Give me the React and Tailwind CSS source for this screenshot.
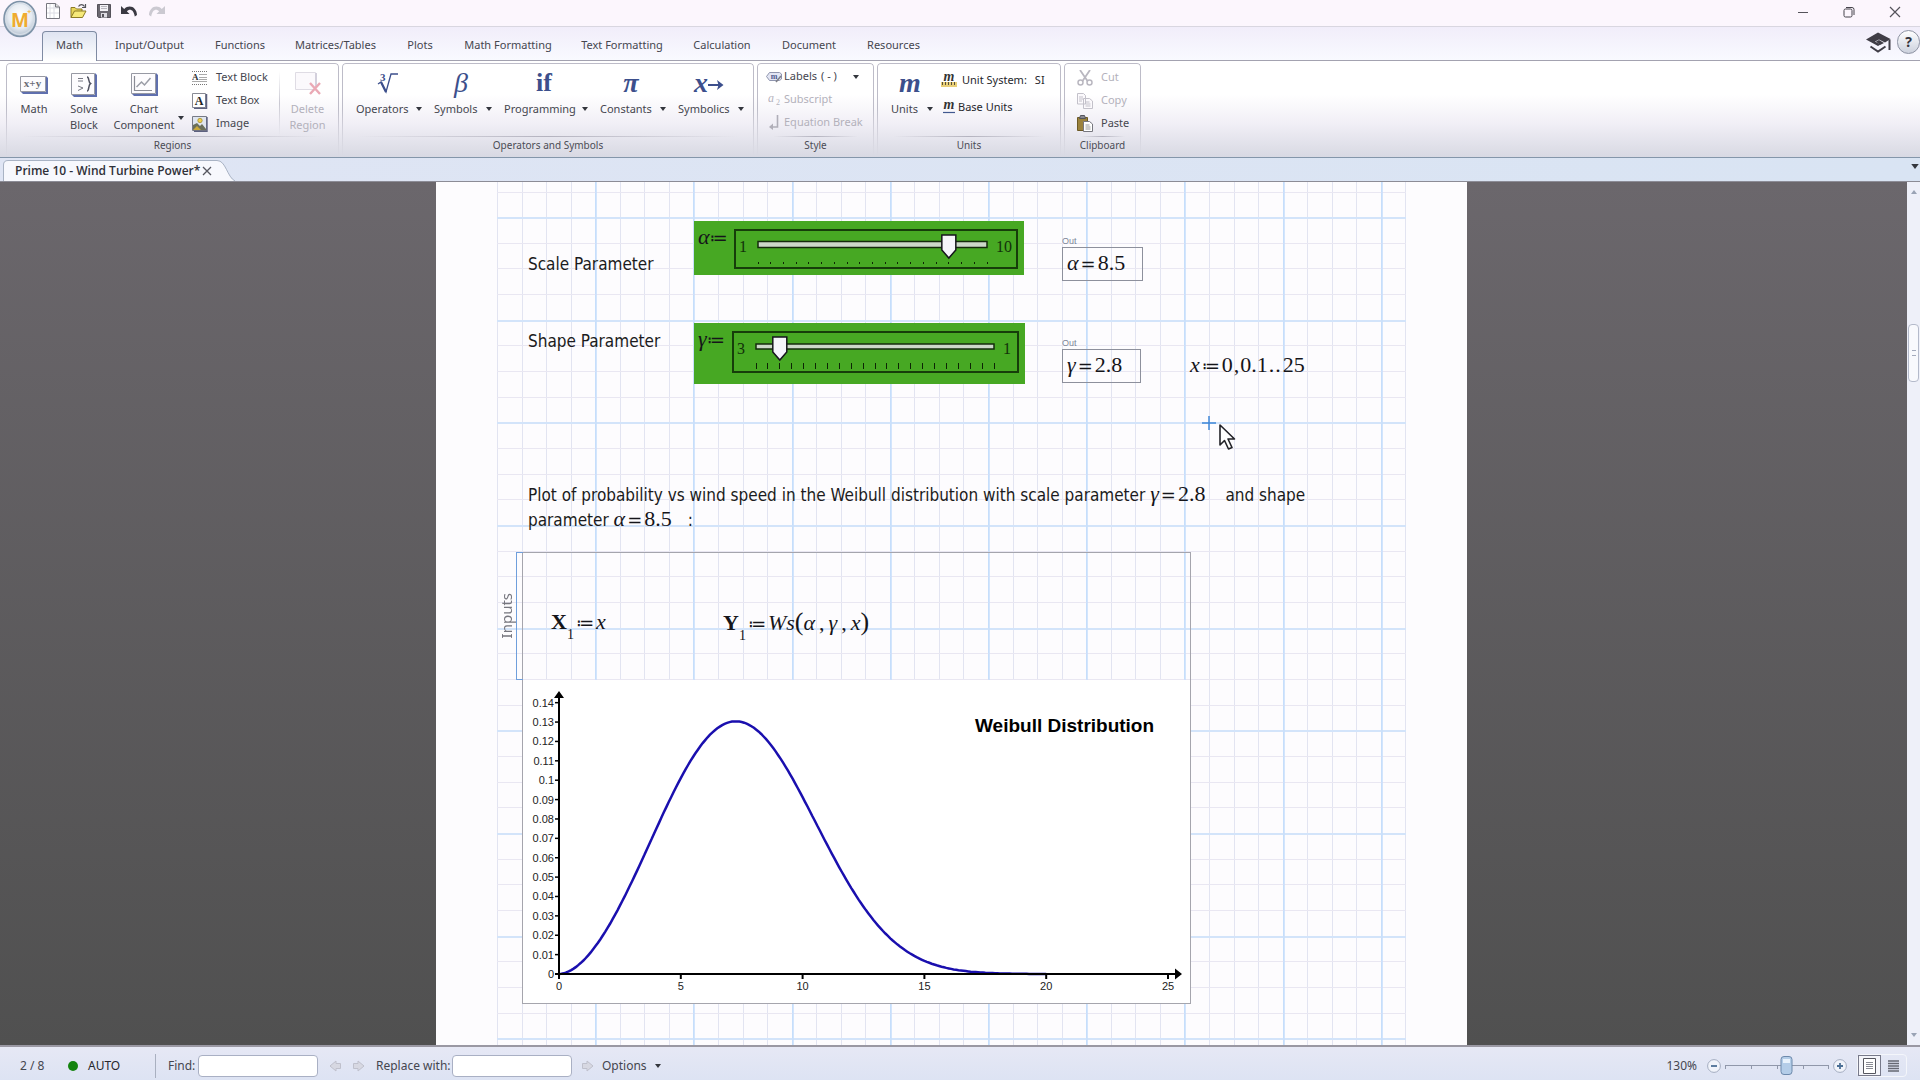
import React, { useState } from "react";
import clsx from "clsx";

const TABS = [
  { label: "Math", width: "w-[55px]" },
  { label: "Input/Output", width: "w-[95px]" },
  { label: "Functions", width: "w-[76px]" },
  { label: "Matrices/Tables", width: "w-[105px]" },
  { label: "Plots", width: "w-[54px]" },
  { label: "Math Formatting", width: "w-[112px]" },
  { label: "Text Formatting", width: "w-[106px]" },
  { label: "Calculation", width: "w-[84px]" },
  { label: "Document", width: "w-[80px]" },
  { label: "Resources", width: "w-[79px]" },
];

// ---------------- SMALL ICONS ----------------
const Caret = ({ className }) => (
  <svg viewBox="0 0 6 4" className={clsx("h-1 w-1.5 shrink-0", className)} aria-hidden="true">
    <path d="M0 0h6L3 4z" fill="#33363d" />
  </svg>
);

const Logo = () => (
  <svg viewBox="0 0 34 38" className="h-[38px] w-[34px]" aria-hidden="true">
    <defs>
      <radialGradient id="orb" cx="50%" cy="40%" r="60%">
        <stop offset="0" stopColor="#ffffff" />
        <stop offset="0.6" stopColor="#e6ebf2" />
        <stop offset="1" stopColor="#aebccb" />
      </radialGradient>
    </defs>
    <ellipse cx="17" cy="19" rx="16" ry="17.5" fill="url(#orb)" stroke="#7e93a8" strokeWidth="1.6" />
    <ellipse cx="17" cy="19" rx="14" ry="15.5" fill="none" stroke="#d5dde6" strokeWidth="1.2" />
    <text x="17" y="27" textAnchor="middle" fontFamily="Open Sans, sans-serif" fontWeight="bold" fontSize="19" fill="#efab2f">M</text>
    <path d="M26 9.500l.7 1.600 1.600.5-1.600.6-.7 1.600-.6-1.600-1.600-.6 1.600-.5z" fill="#f3bf57" />
  </svg>
);

const NewIcon = () => (
  <svg viewBox="0 0 14 16" className="h-4 w-3.5" aria-hidden="true">
    <path d="M.5.500h9l4 3.500v11.500H.5z" fill="#fff" stroke="#77777f" />
    <path d="M4 1v14M8 1v14M1 5h12M1 10h12" stroke="#dcdce4" />
    <path d="M9.500.500V4h4" fill="#ddd" stroke="#77777f" />
  </svg>
);

const OpenIcon = () => (
  <svg viewBox="0 0 17 16" className="h-4 w-[17px]" aria-hidden="true">
    <path d="M1 14.500V4.500h4l1.500 1.500H12v2" fill="#e8d65a" stroke="#8b7a24" />
    <path d="M1 14.500L4.500 8H16l-3.500 6.500z" fill="#f6e979" stroke="#8b7a24" />
    <path d="M8.500 3.500C10 1 13 1 14.500 3.500M15.500 1v3.500H12" fill="none" stroke="#55555c" strokeWidth="1.2" />
  </svg>
);

const SaveIcon = () => (
  <svg viewBox="0 0 14 14" className="h-3.5 w-3.5" aria-hidden="true">
    <path d="M.5.500h13v13h-12l-1-1z" fill="#6b6870" stroke="#55525a" />
    <path d="M3 1h8v6H3z" fill="#f4f2f6" />
    <path d="M4 2.500h6M4 4.500h6" stroke="#b9b6bf" />
    <path d="M4 9h6v4.500H4z" fill="#dedce2" />
    <path d="M5 10h2v3H5z" fill="#55525a" />
  </svg>
);

const UndoIcon = ({ color }) => (
  <svg viewBox="0 0 17 14" className="h-3.5 w-[17px]" aria-hidden="true">
    <path d="M0 2v8h8.500L5.800 7.300C8.500 4.500 12.500 5 13.800 12.500L16 11C16 3.500 8.500-.5 3.200 4.900z" fill={color} />
  </svg>
);

const CardIcon = ({ children, width, height }) => (
  <svg viewBox={`0 0 ${width} ${height}`} width={width} height={height} aria-hidden="true">
    <path d={`M${width - 3} 1l2 2v${height - 3}H4l-2-2h${width - 5}z`} fill="#5f6fae" />
    <path d={`M1.500 1.500h${width - 5}v${height - 4}h${5 - width}z`} fill="#fdfcfe" stroke="#9799a3" />
    {children}
  </svg>
);

const MathIcon = () => (
  <CardIcon width={30} height={19}>
    <text x="13.500" y="12" textAnchor="middle" fontFamily="Liberation Serif, serif" fontWeight="bold" fontSize="11" fill="#6b6c76">x+y</text>
  </CardIcon>
);

const SolveIcon = () => (
  <CardIcon width={28} height={25}>
    <path d="M8 6.500h5M8 9h5M8 14l5 2-5 2.500" fill="none" stroke="#777983" />
    <path d="M17 5c2.500 0 1 5 3.500 6.500C18 13 19.500 19 17 19" fill="none" stroke="#4f5160" strokeWidth="1.5" />
  </CardIcon>
);

const ChartIcon = () => (
  <CardIcon width={29} height={24}>
    <path d="M4.500 4v14.500H22" fill="none" stroke="#8a8c95" strokeWidth="1.2" />
    <path d="M6.500 15l5-5 3 3 6-7" fill="none" stroke="#9a9ca6" strokeWidth="1.5" />
  </CardIcon>
);

const DeleteIcon = () => (
  <svg viewBox="0 0 28 26" className="h-[26px] w-7" aria-hidden="true">
    <path d="M1.500 1.500h20v17h-20z" fill="#fbf9fc" stroke="#dfdce4" />
    <path d="M22 2v14" stroke="#d3d0dc" strokeWidth="2" />
    <path d="M16 12l10 11M26 12L16 23" stroke="#eaa9b5" strokeWidth="2.400" />
  </svg>
);

const TextBlockIcon = () => (
  <svg viewBox="0 0 16 14" className="h-3.5 w-4" aria-hidden="true">
    <path d="M0 .500h16M0 13.500h16" stroke="#777" strokeDasharray="1 1" />
    <text x="0" y="9" fontFamily="Liberation Serif, serif" fontWeight="bold" fontSize="9" fill="#333">A</text>
    <path d="M7 3.500h8M7 6.500h8M0 10.500h15M7 8.500h8" stroke="#aaa" />
  </svg>
);

const TextBoxIcon = () => (
  <svg viewBox="0 0 16 16" className="h-4 w-4" aria-hidden="true">
    <path d="M.5.500h13v14H.5z" fill="#fff" stroke="#888a94" />
    <path d="M14.500 1v14.500H2" fill="none" stroke="#5d6180" strokeWidth="1.5" />
    <text x="7" y="12" textAnchor="middle" fontFamily="Liberation Serif, serif" fontWeight="bold" fontSize="12" fill="#222">A</text>
  </svg>
);

const ImageIcon = () => (
  <svg viewBox="0 0 16 16" className="h-4 w-4" aria-hidden="true">
    <path d="M.5.500h14v14H.5z" fill="#dfe5ee" stroke="#777a86" />
    <circle cx="8" cy="4.500" r="2.200" fill="#f0d04a" stroke="#9a8530" strokeWidth=".7" />
    <path d="M1 14V9l4-2 3 3 2-2 4 5v1z" fill="#6b6f5a" />
    <path d="M1 14l4-4 4 4z" fill="#c9a83a" />
    <path d="M15 1v14.500H2" fill="none" stroke="#5d6180" strokeWidth="1.4" />
  </svg>
);

const LabelsIcon = () => (
  <svg viewBox="0 0 16 12" className="h-3 w-4" aria-hidden="true">
    <path d="M3.500 1.500h10l2 1.500v5l-2 1.500h-10l-3-4z" fill="#e3e6f4" stroke="#8f95ae" />
    <text x="8" y="8" textAnchor="middle" fontFamily="Liberation Serif, serif" fontWeight="bold" fontSize="8" fill="#4c5a8c">m</text>
    <path d="M10 11l5-6" stroke="#7f8088" strokeWidth="1.6" />
  </svg>
);

const SubscriptIcon = () => (
  <svg viewBox="0 0 14 13" className="h-[13px] w-3.5" aria-hidden="true">
    <text x="0" y="9" fontFamily="Liberation Serif, serif" fontStyle="italic" fontSize="12" fill="#b5b3bd">a</text>
    <text x="8" y="12" fontFamily="Liberation Serif, serif" fontSize="8" fill="#b5b3bd">2</text>
  </svg>
);

const BreakIcon = () => (
  <svg viewBox="0 0 14 15" className="h-[15px] w-3.5" aria-hidden="true">
    <path d="M9.500 0v12H3" fill="none" stroke="#b0aeb8" strokeWidth="1.600" />
    <path d="M5 8.500L1 12l4 3z" fill="#b0aeb8" />
  </svg>
);

const UnitSystemIcon = () => (
  <svg viewBox="0 0 16 16" className="h-4 w-4 overflow-visible" aria-hidden="true">
    <text x="8" y="8" textAnchor="middle" fontFamily="Liberation Serif, serif" fontStyle="italic" fontWeight="bold" fontSize="14" fill="#333">m</text>
    <path d="M0 9h16v5H0z" fill="#e9cf77" />
    <path d="M1.500 9v3M4.500 9v3M7.500 9v3M10.500 9v3M13.500 9v3" stroke="#57503a" />
  </svg>
);

const BaseUnitsIcon = () => (
  <svg viewBox="0 0 12 13" className="h-[13px] w-3 overflow-visible" aria-hidden="true">
    <text x="6" y="8" textAnchor="middle" fontFamily="Liberation Serif, serif" fontStyle="italic" fontWeight="bold" fontSize="14" fill="#333">m</text>
    <path d="M0 11.500h12" stroke="#41588f" strokeWidth="1.2" />
  </svg>
);

const CutIcon = () => (
  <svg viewBox="0 0 16 16" className="h-4 w-4" fill="none" stroke="#b9b7c0" aria-hidden="true">
    <path d="M3 0l7.500 11M13 0L5.500 11" strokeWidth="1.8" />
    <circle cx="3.500" cy="12.500" r="2.500" strokeWidth="1.500" />
    <circle cx="12.500" cy="12.500" r="2.500" strokeWidth="1.500" />
  </svg>
);

const CopyIcon = () => (
  <svg viewBox="0 0 16 16" className="h-4 w-4" fill="#fbf9fc" stroke="#c3c1ca" aria-hidden="true">
    <path d="M.5.500h6l2 2V11H.5zM6.500 5.500h6l3 2.500v7.500h-9z" />
    <path d="M2 4h4M2 6h4M2 8h3M8.500 9h4M8.500 11h5M8.500 13h5" />
  </svg>
);

const PasteIcon = () => (
  <svg viewBox="0 0 16 17" className="h-[17px] w-4" aria-hidden="true">
    <path d="M.5 2.500h10v13H.5z" fill="#9b823c" stroke="#6d5a26" />
    <path d="M3.500.500h4l1 3h-6z" fill="#8b8b93" stroke="#55555c" />
    <path d="M6.500 6.500h6l3 2.500v7.500h-9z" fill="#fff" stroke="#77777f" />
    <path d="M8.500 10h4M8.500 12h5M8.500 14h5" stroke="#999" />
  </svg>
);

const RootIcon = () => (
  <svg viewBox="0 0 21 22" className="h-[22px] w-[21px]" aria-hidden="true">
    <path d="M1 12l3-2 5 10 5-18h7" fill="none" stroke="#3c4f8c" strokeWidth="1.300" />
    <path d="M4 10l5 10" stroke="#3c4f8c" strokeWidth="2.200" />
    <text x="3" y="9" fontFamily="Liberation Serif, serif" fontSize="11" fontWeight="bold" fill="#3c4f8c">3</text>
  </svg>
);

const SchoolIcon = () => (
  <svg viewBox="0 0 25 21" className="h-[21px] w-[25px]" aria-hidden="true">
    <path d="M0 7.500L12 .500l12.500 6.500L19 10.500 13 7.500 9 9.500l5.500 3-2.500 1.500z" fill="#3f3d46" />
    <path d="M10 9.500l3-1.500 5 3-4 2z" fill="#3f3d46" />
    <path d="M23.500 7.500V18" stroke="#3f3d46" strokeWidth="2" />
    <path d="M4.500 14.500l7.500 5 7.500-5" fill="none" stroke="#3f3d46" strokeWidth="2" />
  </svg>
);

const FindArrow = ({ flip }) => (
  <svg viewBox="0 0 12 12" className={clsx("h-3 w-3", flip && "-scale-x-100")} aria-hidden="true">
    <path d="M.5 3.500H5V1l6 5-6 5V8.500H.5z" fill="#d7d8e2" stroke="#bfc0cc" />
  </svg>
);

// ---------------- RIBBON PIECES ----------------
const Group = ({ title, width, children }) => (
  <section aria-label={title} className={clsx("relative flex h-[92px] shrink-0 flex-col", width)}>
    <span className="pointer-events-none absolute inset-0 rounded-t border border-b-0 border-[#bdbcc8] [mask-image:linear-gradient(black_50%,transparent)]" />
    <div className="flex h-[73px]">{children}</div>
    <div className="mx-4 h-px bg-linear-to-r from-transparent via-[#b4b3bf] to-transparent" />
    <h2 className="text-center text-[10px] leading-[17px] text-[#4b4c55]">{title}</h2>
  </section>
);

const BigButton = ({ icon, label, width, disabled }) => (
  <button
    type="button"
    disabled={disabled}
    className={clsx("flex flex-col items-center pt-2", width, disabled && "text-[#b3b1bb]")}
  >
    <span className="flex h-[26px] items-center">{icon}</span>
    <span className="mt-1 whitespace-pre text-center leading-4">{label}</span>
  </button>
);

const MenuButton = ({ glyph, label, width }) => (
  <button type="button" className={clsx("flex flex-col items-start pt-1.5", width)}>
    <span className="flex h-7 w-full items-center justify-center pr-1 font-['Liberation_Serif',serif] text-[28px] leading-7 text-[#3c4f8c]">
      {glyph}
    </span>
    <span className="mt-1 flex w-full items-center justify-between leading-4">
      {label}
      <Caret />
    </span>
  </button>
);

const SmallButton = ({ icon, label, disabled, children }) => (
  <button
    type="button"
    disabled={disabled}
    className={clsx("flex h-[23px] items-center whitespace-nowrap", disabled && "text-[#b3b1bb]")}
  >
    {icon}
    {label}
    {children}
  </button>
);

const Ribbon = () => (
  <div className="flex h-[97px] shrink-0 gap-[3px] border-b border-[#8496aa] bg-linear-to-b from-white from-35% via-[#f1eff6] via-65% to-[#d8d9e3] pt-0.5 pl-1.5">
    <Group title="Regions" width="w-[333px]">
      <BigButton icon={<MathIcon />} label="Math" width="w-14" />
      <BigButton icon={<SolveIcon />} label={"Solve\nBlock"} width="w-11" />
      <div className="flex w-[78px] items-end">
        <BigButton icon={<ChartIcon />} label={"Chart\nComponent"} width="h-full grow pl-1" />
        <Caret className="mb-4" />
      </div>
      <div className="flex flex-col pt-[3px] pl-2">
        <SmallButton icon={<span className="w-6"><TextBlockIcon /></span>} label="Text Block" />
        <SmallButton icon={<span className="w-6"><TextBoxIcon /></span>} label="Text Box" />
        <SmallButton icon={<span className="w-6"><ImageIcon /></span>} label="Image" />
      </div>
      <div className="mt-2 ml-auto w-px bg-linear-to-b from-transparent via-[#c9c8d2] to-transparent" />
      <BigButton icon={<DeleteIcon />} label={"Delete\nRegion"} width="mr-1 w-[55px]" disabled />
    </Group>

    <Group title="Operators and Symbols" width="w-[412px]">
      <div className="flex gap-3 pl-[14px]">
        <MenuButton glyph={<RootIcon />} label="Operators" width="w-[66px]" />
        <MenuButton glyph={<i>β</i>} label="Symbols" width="w-[58px]" />
        <MenuButton glyph={<span className="text-[26px] font-bold">if</span>} label="Programming" width="w-[84px]" />
        <MenuButton glyph={<i className="font-bold">π</i>} label="Constants" width="w-[66px]" />
        <MenuButton
          glyph={
            <>
              <i className="font-bold">x</i>
              <svg viewBox="0 0 16 12" className="mt-1 h-3 w-4" aria-hidden="true">
                <path d="M0 6h11" stroke="#3c4f8c" strokeWidth="2" />
                <path d="M9 1l6.500 5L9 11l1.500-5z" fill="#3c4f8c" />
              </svg>
            </>
          }
          label="Symbolics"
          width="w-[66px]"
        />
      </div>
    </Group>

    <Group title="Style" width="w-[117px]">
      <div className="flex flex-col pt-[2px] pl-[9px]">
        <SmallButton icon={<span className="w-[18px]"><LabelsIcon /></span>} label="Labels">
          <span className="ml-1">( - )</span>
          <Caret className="ml-4" />
        </SmallButton>
        <SmallButton icon={<span className="w-[18px] pl-0.5"><SubscriptIcon /></span>} label="Subscript" disabled />
        <SmallButton icon={<span className="w-[18px] pl-0.5"><BreakIcon /></span>} label="Equation Break" disabled />
      </div>
    </Group>

    <Group title="Units" width="w-[184px]">
      <div className="flex pl-[14px]">
        <MenuButton glyph={<i className="font-bold">m</i>} label="Units" width="w-[42px]" />
      </div>
      <div className="flex flex-col gap-1 pt-1.5 pl-2 text-[#26272c]">
        <SmallButton icon={<span className="w-[21px]"><UnitSystemIcon /></span>} label="Unit System:">
          <span className="ml-2">SI</span>
        </SmallButton>
        <SmallButton icon={<span className="w-[17px] pl-0.5"><BaseUnitsIcon /></span>} label="Base Units" />
      </div>
    </Group>

    <Group title="Clipboard" width="w-[77px]">
      <div className="flex flex-col pt-[3px] pl-[13px]">
        <SmallButton icon={<span className="w-6"><CutIcon /></span>} label="Cut" disabled />
        <SmallButton icon={<span className="w-6"><CopyIcon /></span>} label="Copy" disabled />
        <SmallButton icon={<span className="w-6"><PasteIcon /></span>} label="Paste" />
      </div>
    </Group>
  </div>
);

// ---------------- TITLE BAR + TABS ----------------
const TitleBar = () => (
  <header className="relative shrink-0">
    <div className="flex h-[27px] items-center border-b border-[#d9d6e0] bg-[#fcf6fd] pl-[46px]">
      <div className="flex items-center gap-2.5 pb-1">
        <button type="button" aria-label="New"><NewIcon /></button>
        <button type="button" aria-label="Open"><OpenIcon /></button>
        <button type="button" aria-label="Save"><SaveIcon /></button>
        <button type="button" aria-label="Undo"><UndoIcon color="#3a3942" /></button>
        <button type="button" aria-label="Redo" className="-scale-x-100"><UndoIcon color="#cbc9d1" /></button>
      </div>
      <div className="ml-auto flex pr-0.5 pb-0.5">
        <button type="button" aria-label="Minimize" className="flex w-[46px] justify-center">
          <svg viewBox="0 0 12 12" className="h-3 w-3"><path d="M1 6.500h10" stroke="#55535b" /></svg>
        </button>
        <button type="button" aria-label="Restore" className="flex w-[46px] justify-center">
          <svg viewBox="0 0 12 12" className="h-3 w-3" fill="none" stroke="#45434b">
            <rect x="1" y="3" width="8" height="8" rx="1.500" />
            <path d="M3 1.500h6A2 2 0 0111 3.500V9" />
          </svg>
        </button>
        <button type="button" aria-label="Close" className="flex w-[46px] justify-center">
          <svg viewBox="0 0 12 12" className="h-3 w-3"><path d="M1 1l10 10M11 1L1 11" stroke="#55535b" strokeWidth="1.200" /></svg>
        </button>
      </div>
    </div>
    <nav className="flex h-[34px] items-end border-b border-[#a3a2b0] bg-linear-to-b from-[#f1edfa] to-[#f9faff] pl-[42px]">
      <div className="-mb-px flex gap-[5px]">
        {TABS.map((tab, i) => (
          <button
            key={tab.label}
            type="button"
            className={clsx(
              "h-[30px] rounded-t border border-b-0 pb-0.5 text-center whitespace-nowrap",
              tab.width,
              i === 0 ? "border-[#7f8ba3] bg-linear-to-b from-[#dfe4f1] to-white" : "border-transparent"
            )}
          >
            {tab.label}
          </button>
        ))}
      </div>
      <div className="mb-1.5 ml-auto flex items-center gap-1.5">
        <button type="button" aria-label="Learning"><SchoolIcon /></button>
        <button
          type="button"
          aria-label="Help"
          className="h-6 w-[23px] rounded-full border border-[#8d93a3] bg-linear-to-b from-white to-[#ccd1dd] text-[14px] leading-[22px] font-bold text-[#34343c]"
        >
          ?
        </button>
      </div>
    </nav>
    <button type="button" aria-label="Application menu" className="absolute top-0 left-[3px]"><Logo /></button>
  </header>
);

const DocumentTabs = () => (
  <div className="flex h-6 shrink-0 items-end border-b border-[#8c8c96] bg-linear-to-r from-[#dfe5f4] to-[#d9e4f3]">
    <div className="relative ml-[3px] flex h-[21px] w-[232px] items-center">
      <svg viewBox="0 0 232 21" className="absolute inset-0 h-full w-full" preserveAspectRatio="none" aria-hidden="true">
        <path d="M.5 21V5Q.5.500 5 .500H214C223 .500 224 17 232 21" fill="#f7f8fd" stroke="#a9b3c4" />
      </svg>
      <span className="relative pl-3 font-['Open_Sans',sans-serif] text-[12px] font-semibold text-[#2f3038]">
        Prime 10 - Wind Turbine Power*
      </span>
      <button type="button" aria-label="Close document" className="relative ml-0.5">
        <svg viewBox="0 0 10 10" className="h-2.5 w-2.5"><path d="M1 1l8 8M9 1L1 9" stroke="#55565f" strokeWidth="1.300" /></svg>
      </button>
    </div>
    <button type="button" aria-label="Open documents" className="mb-3 ml-auto pr-px"><Caret className="h-[5px] w-2" /></button>
  </div>
);

// ---------------- WORKSHEET ----------------
const STEP_X = 24.55;
const STEP_Y = 25.66;

const GraphPaper = () => {
  const columns = Array.from({ length: 38 }, (_, i) => i);
  const rows = Array.from({ length: 34 }, (_, i) => i);
  return (
    <svg width="909" height="863" className="absolute top-0 left-[61px]" shapeRendering="crispEdges" aria-hidden="true">
      {columns.map((i) => (
        <rect key={`c${i}`} x={Math.round(i * STEP_X)} y="0" width="1" height="863" fill={i % 4 === 0 && i ? "#bfdbfa" : "#e2e4f1"} />
      ))}
      {rows.map((i) => (
        <rect
          key={`r${i}`}
          x="0"
          y={Math.round(9.500 + i * STEP_Y)}
          width="909"
          height={i % 4 === 1 ? 2 : 1}
          fill={i % 4 === 1 ? "#d3e4fa" : "#e9e7f2"}
        />
      ))}
      {columns.filter((i) => i && i % 4 === 0).map((i) => (
        <rect key={`m${i}`} x={Math.round(i * STEP_X)} y="0" width="2" height="863" fill="#c8dffb" fillOpacity="0.8" />
      ))}
    </svg>
  );
};

const Op = ({ children }) => (
  <span className="mx-0.5 font-['DejaVu_Sans',sans-serif] text-[18px] leading-none">{children}</span>
);

const Comma = () => <span className="mx-px">,</span>;

const ArgComma = () => <span className="mx-1">,</span>;

const mathFont = "font-['Liberation_Serif',serif] text-[22px] leading-6 whitespace-nowrap text-[#15151a]";

const Result = ({ name, value }) => (
  <span className={mathFont}>
    <i>{name}</i>
    <Op>=</Op>
    {value}
  </span>
);

const SliderControl = ({ name, left, right, min, max, step, initial, reversed, ticks, size }) => {
  const [value, setValue] = useState(initial);
  const share = reversed ? (max - value) / (max - min) : (value - min) / (max - min);
  const { track, tall, tick } = size;
  const thumbX = 9 + share * track;
  return (
    <div className={clsx("flex bg-[#47a823] pl-1", size.box)}>
      <label htmlFor={`slider-${name}`} className={clsx("pt-1", mathFont)}>
        <i>{name}</i>
        <span className="font-['DejaVu_Sans',sans-serif] text-[18px] leading-none">≔</span>
      </label>
      <div className={clsx("mt-2 ml-auto flex border-2 border-[#163d0a] pl-[3px] font-['Liberation_Serif',serif] text-[16px] leading-8 text-[#12300a]", size.frame)}>
        <span className="w-2.5">{left}</span>
        <div className="relative">
          <svg width={track + 18} height={tall} aria-hidden="true">
            <rect x="9" y={tick ? 11 : 10.500} width={track} height={tick ? 5 : 6} fill="#ccd8c8" stroke="#142b0c" strokeWidth="1.500" />
            {Array.from({ length: ticks }, (_, i) => (
              <rect key={i} x={Math.round(8.500 + (i * track) / (ticks - 1))} y={tick ? 30 : 31} width="1" height={tick ? 6 : 2} fill="#0d2405" />
            ))}
            <path d={`M${thumbX - 7} 4h14v15l-7 8-7-8z`} fill="#f6f5fb" stroke="#15151c" strokeWidth="1.500" />
          </svg>
          <input
            id={`slider-${name}`}
            type="range"
            min={min}
            max={max}
            step={step}
            value={value}
            dir={reversed ? "rtl" : "ltr"}
            onChange={(e) => setValue(Number(e.target.value))}
            className="absolute inset-x-0 top-0 h-7 cursor-pointer opacity-0"
          />
        </div>
        <span>{right}</span>
      </div>
    </div>
  );
};

const OutBox = ({ width, children }) => (
  <div>
    <div className="font-['Liberation_Sans',sans-serif] text-[9px] leading-3 text-[#7c8698]">Out</div>
    <div className={clsx("h-[34px] border border-[#8d909c] pt-[3px] pl-1", width)}>{children}</div>
  </div>
);

// Weibull density with scale 8.5 and shape 2.8
const weibull = (x, scale, shape) =>
  (shape / scale) * (x / scale) ** (shape - 1) * Math.exp(-((x / scale) ** shape));

const WeibullChart = () => {
  const px = (x) => 36 + x * 24.36;
  const py = (y) => 294 - y * 1938;
  const points = Array.from({ length: 201 }, (_, i) => {
    const x = i / 10;
    return `${px(x).toFixed(1)},${py(weibull(x, 8.5, 2.8)).toFixed(1)}`;
  }).join(" ");
  return (
    <svg width="667" height="323" className="block bg-white" fontFamily="Liberation Sans, Arial, sans-serif" role="img" aria-label="Weibull Distribution">
      <polyline points={points} fill="none" stroke="#1a0fae" strokeWidth="2.500" />
      <path d="M36 16v282M32 294h620" stroke="#000" strokeWidth="2" />
      <path d="M36 11l5 7H31zM659 294l-7-5.500v11z" fill="#000" />
      {Array.from({ length: 15 }, (_, i) => (
        <g key={i}>
          <path d={`M32 ${py(i / 100)}h4`} stroke="#000" strokeWidth="1.500" />
          <text x="31" y={py(i / 100) + 4} textAnchor="end" fontSize="11" fill="#222">{i / 100}</text>
        </g>
      ))}
      {[0, 5, 10, 15, 20, 25].map((x) => (
        <g key={x}>
          <path d={`M${px(x)} 294v5`} stroke="#000" strokeWidth="2" />
          <text x={px(x)} y="310" textAnchor="middle" fontSize="11" fill="#222">{x}</text>
        </g>
      ))}
      <text x="452" y="52" fontSize="19" fontWeight="bold" fill="#000">Weibull Distribution</text>
    </svg>
  );
};

const bodyText = "font-['DejaVu_Sans_Condensed','DejaVu_Sans',sans-serif] text-[17px] leading-6 text-[#1b1b20]";

const Worksheet = () => (
  <article className="relative h-[1400px] w-[1031px] shrink-0 bg-[#fdfcfe]">
    <GraphPaper />

    <p className={clsx("absolute top-[70px] left-[92px]", bodyText)}>Scale Parameter</p>
    <p className={clsx("absolute top-[147px] left-[92px]", bodyText)}>Shape Parameter</p>

    <div className="absolute top-[39px] left-[258px]">
      <SliderControl
        name="α" left="1" right="10" min={1} max={10} step={0.5} initial={8.5} ticks={19}
        size={{ track: 229, tall: 36, tick: false, box: "h-[54px] w-[330px] pr-1.5", frame: "h-10 w-[284px]" }}
      />
    </div>
    <div className="absolute top-[141px] left-[258px]">
      <SliderControl
        name="γ" left="3" right="1" min={1} max={3} step={0.1} initial={2.8} reversed ticks={21}
        size={{ track: 238, tall: 38, tick: true, box: "h-[61px] w-[331px] pr-1.5", frame: "h-[42px] w-[287px]" }}
      />
    </div>

    <div className="absolute top-[53px] left-[626px]">
      <OutBox width="w-[81px]"><Result name="α" value="8.5" /></OutBox>
    </div>
    <div className="absolute top-[155px] left-[626px]">
      <OutBox width="w-[79px]"><Result name="γ" value="2.8" /></OutBox>
    </div>
    <div className={clsx("absolute top-[171px] left-[754px]", mathFont)}>
      <i>x</i>
      <Op>≔</Op>0<Comma />0.1<span className="mx-px">.</span>.<span className="ml-0.5">25</span>
    </div>

    {/* ---------------- CURSOR ---------------- */}
    <svg width="16" height="16" className="absolute top-[233px] left-[765px]" aria-hidden="true">
      <path d="M8 1v14M1 8h14" stroke="#3f86d8" strokeWidth="1.500" />
    </svg>
    <svg width="18" height="28" className="absolute top-[241px] left-[782px]" aria-hidden="true">
      <path d="M2 2v20l4.500-4.500L10.500 26l3.500-1.500-4-8.500h6.500z" fill="#fff" stroke="#222228" strokeWidth="1.600" strokeLinejoin="round" />
    </svg>

    <p className={clsx("absolute top-[300px] left-[92px] whitespace-nowrap", bodyText)}>
      Plot of probability vs wind speed in the Weibull distribution with scale parameter{" "}
      <Result name="γ" value="2.8" />
      <span className="pl-5">and shape</span>
      <br />
      parameter <Result name="α" value="8.5" />
      <span className="pl-4">:</span>
    </p>

    {/* ---------------- CHART COMPONENT ---------------- */}
    <section className="absolute top-[370px] left-[86px] w-[669px] border border-[#a5a5ad]">
      <div className="absolute -top-px -left-[7px] h-[128px] w-[7px] border border-r-0 border-[#6f9fdc]" />
      <div className="absolute top-10 -left-[27px] rotate-180 font-['Noto_Sans',sans-serif] text-[15px] leading-5 text-[#77777f] [writing-mode:vertical-rl]">
        Inputs
      </div>
      <div className={clsx("flex h-[127px] items-start pt-[57px] pl-7", mathFont)}>
        <div className="w-[172px]">
          <b className="font-bold">X</b>
          <span className="inline-block translate-y-2.5 text-[14px] leading-none">1</span>
          <Op>≔</Op>
          <i>x</i>
        </div>
        <div>
          <b className="font-bold">Y</b>
          <span className="inline-block translate-y-2.5 text-[14px] leading-none">1</span>
          <Op>≔</Op>
          <i>Ws</i>
          <span className="text-[26px]">(</span>
          <i>α</i><ArgComma /><i>γ</i><ArgComma /><i>x</i>
          <span className="text-[26px]">)</span>
        </div>
      </div>
      <WeibullChart />
    </section>
  </article>
);

// ---------------- STATUS BAR ----------------
const ZoomButton = ({ label, path }) => (
  <button type="button" aria-label={label}>
    <svg viewBox="0 0 14 14" className="h-3.5 w-3.5">
      <circle cx="7" cy="7" r="6.400" fill="#f0f3fa" stroke="#a4adc0" />
      <path d={path} stroke="#4c7096" strokeWidth="1.800" />
    </svg>
  </button>
);

const StatusBar = () => {
  const [find, setFind] = useState("");
  const [replace, setReplace] = useState("");
  const box = "h-[22px] w-[120px] rounded-sm border border-[#a9b0c4] bg-white px-1";
  return (
    <footer className="flex h-[35px] shrink-0 items-center border-t-2 border-[#9a98a3] bg-linear-to-b from-[#e6e8f5] to-[#dde3f3] pt-1 text-[12px]">
      <span className="w-12 pl-5">2 / 8</span>
      <span className="ml-5 h-2.5 w-2.5 rounded-full bg-[#14840f]" />
      <span className="ml-2.5 w-[67px] text-[#26272c]">AUTO</span>
      <span className="h-6 w-px bg-[#a9b0c0]" />
      <label htmlFor="find" className="ml-3 w-[30px] whitespace-nowrap">Find:</label>
      <input id="find" value={find} onChange={(e) => setFind(e.target.value)} className={box} />
      <div className="flex w-[58px] items-center justify-center gap-3">
        <button type="button" aria-label="Find previous"><FindArrow flip /></button>
        <button type="button" aria-label="Find next"><FindArrow /></button>
      </div>
      <label htmlFor="replace" className="w-[76px] whitespace-nowrap">Replace with:</label>
      <input id="replace" value={replace} onChange={(e) => setReplace(e.target.value)} className={box} />
      <button type="button" aria-label="Replace" className="ml-2.5"><FindArrow /></button>
      <button type="button" className="ml-2 flex items-center gap-2">Options <Caret /></button>

      <span className="mr-2.5 ml-auto">130%</span>
      <ZoomButton label="Zoom out" path="M4 7h6" />
      <div className="relative mx-1 h-5 w-[104px]">
        <svg viewBox="0 0 104 20" className="h-5 w-[104px]" aria-hidden="true">
          <path d="M0 9.500h104M.5 9v4M26.500 9v4M52.500 9v4M78.500 9v4M103.500 9v4" stroke="#9097aa" />
          <rect x="56" y=".500" width="11" height="18" rx="3" fill="#b4cde8" stroke="#6d89ab" />
          <path d="M58 5h7" stroke="#e8f2fc" strokeWidth="4" />
        </svg>
        <input type="range" aria-label="Zoom" min="10" max="230" defaultValue="130" className="absolute inset-0 w-full opacity-0" />
      </div>
      <ZoomButton label="Zoom in" path="M4 7h6M7 4v6" />
      <div className="mr-[13px] ml-2.5 flex h-[23px] w-[50px] rounded-sm border border-[#f4f6fb]">
        <button type="button" aria-label="Page view" className="flex w-[23px] items-center justify-center border border-[#77798a] bg-[#f4f5fa]">
          <svg viewBox="0 0 13 16" className="h-4 w-[13px]">
            <path d="M.5.500h12v15H.5z" fill="#fff" stroke="#55565f" />
            <path d="M3 4.500h7M3 6.500h7M3 8.500h7M3 10.500h7" stroke="#888a94" />
          </svg>
        </button>
        <button type="button" aria-label="Draft view" className="flex grow items-center justify-center">
          <svg viewBox="0 0 11 12" className="h-3 w-[11px]">
            <path d="M0 1h11M0 3.500h11M0 6h11M0 8.500h11M0 11h11" stroke="#666873" strokeWidth="1.500" />
          </svg>
        </button>
      </div>
    </footer>
  );
};

const ScrollBar = () => (
  <div className="flex w-[13px] shrink-0 flex-col items-center justify-between bg-[#eef0f9] py-2">
    <svg viewBox="0 0 6 4" className="h-1 w-1.5" aria-hidden="true"><path d="M0 4h6L3 0z" fill="#9aa3b5" /></svg>
    <div className="mt-[130px] mb-auto flex h-[58px] w-[11px] items-center justify-center rounded-sm border border-[#b4bacb] bg-[#f8f9fd]">
      <span className="h-1.5 w-1 border-y border-[#a3aabc]" />
    </div>
    <svg viewBox="0 0 6 4" className="h-1 w-1.5" aria-hidden="true"><path d="M0 0h6L3 4z" fill="#9aa3b5" /></svg>
  </div>
);

const App = () => (
  <div className="flex h-screen flex-col overflow-hidden font-['Noto_Sans','Open_Sans',sans-serif] text-[11px] text-[#45464f]">
    <TitleBar />
    <Ribbon />
    <DocumentTabs />
    <div className="flex min-h-0 grow">
      <main className="flex grow justify-center overflow-hidden bg-linear-to-b from-[#6b676c] to-[#505050] pr-1">
        <Worksheet />
      </main>
      <ScrollBar />
    </div>
    <StatusBar />
  </div>
);

export default App;
